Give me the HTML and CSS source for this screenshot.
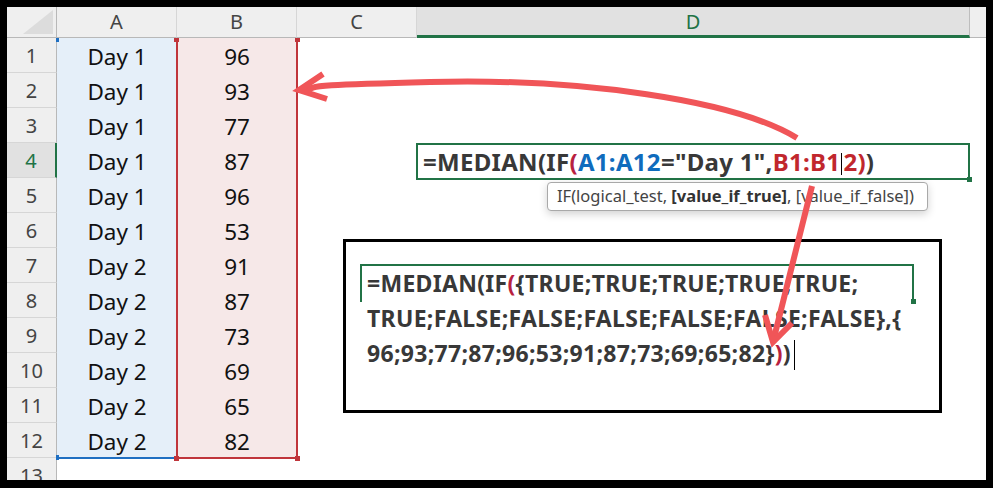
FILE: index.html
```html
<!DOCTYPE html>
<html>
<head>
<meta charset="utf-8">
<link rel="stylesheet" href="styles.css">
</head>
<body>
<div class="frame">
  <div class="sheet">
    <div class="col rowhead">
      <div class="hdr corner"><svg class="tri" width="36" height="26" viewBox="0 0 36 26"><polygon points="34,1 34,25 4,25" fill="#dcdcdc"/></svg></div>
      <div class="rn">1</div><div class="rn">2</div><div class="rn">3</div>
      <div class="rn active">4</div><div class="rn">5</div><div class="rn">6</div>
      <div class="rn">7</div><div class="rn">8</div><div class="rn">9</div>
      <div class="rn">10</div><div class="rn">11</div><div class="rn">12</div>
      <div class="rn">13</div>
    </div>
    <div class="col ca">
      <div class="hdr">A</div>
      <div class="range range-a">
        <span class="h h-tl blue"></span><span class="h h-bl blue"></span>
        <div class="cell">Day 1</div><div class="cell">Day 1</div><div class="cell">Day 1</div>
        <div class="cell">Day 1</div><div class="cell">Day 1</div><div class="cell">Day 1</div>
        <div class="cell">Day 2</div><div class="cell">Day 2</div><div class="cell">Day 2</div>
        <div class="cell">Day 2</div><div class="cell">Day 2</div><div class="cell">Day 2</div>
      </div>
    </div>
    <div class="col cb">
      <div class="hdr">B</div>
      <div class="range range-b">
        <span class="h h-tl red"></span><span class="h h-tr red"></span>
        <span class="h h-bl red"></span><span class="h h-br red"></span>
        <div class="cell">96</div><div class="cell">93</div><div class="cell">77</div>
        <div class="cell">87</div><div class="cell">96</div><div class="cell">53</div>
        <div class="cell">91</div><div class="cell">87</div><div class="cell">73</div>
        <div class="cell">69</div><div class="cell">65</div><div class="cell">82</div>
      </div>
    </div>
    <div class="col cc"><div class="hdr">C</div></div>
    <div class="col cd"><div class="hdr sel">D</div></div>
    <div class="col ce"><div class="hdr"></div></div>
  </div>

  <div class="fbox">
    <span class="ft">=MEDIAN(IF<span class="pr">(</span><span class="bl">A1:A12</span>="Day 1",<span class="rd">B1:B1</span><span class="caret"></span><span class="rd">2)</span>)</span>
    <span class="h h-g"></span>
  </div>
  <div class="tip">IF(logical_test, <b>[value_if_true]</b>, [value_if_false])</div>

  <div class="bbox">
    <div class="edit">
      <div class="editline"><span class="h h-g2"></span></div>
      <div class="ln">=MEDIAN(IF<span class="pr">(</span>{TRUE;TRUE;TRUE;TRUE;TRUE;</div>
      <div class="ln">TRUE;FALSE;FALSE;FALSE;FALSE;FALSE;FALSE},{</div>
      <div class="ln">96;93;77;87;96;53;91;87;73;69;65;82}<span class="pr">)</span>)<span class="caret2"></span></div>
    </div>
  </div>

  <svg class="arrows" width="993" height="488" viewBox="0 0 993 488">
    <g fill="none" stroke="#f05558" stroke-width="6">
      <path d="M797,138 C735,100 580,78 430,82 S330,86 303,90" stroke-linecap="butt"/>
      <path d="M323,74 L299,90 L327,99" stroke-linejoin="miter"/>
      <path d="M812,186 L774,338" />
      <path d="M765,315 L773,342 L792,323" stroke-linejoin="miter"/>
    </g>
  </svg>
</div>
</body>
</html>
```
FILE: styles.css
```css
* { box-sizing: border-box; }
html, body { margin: 0; padding: 0; background: #000; }
.frame {
  position: relative;
  width: 993px;
  height: 488px;
  border-style: solid;
  border-color: #000;
  border-width: 7px 7px 8px 7px;
  background: #fff;
  overflow: hidden;
  font-family: "Noto Sans", "Open Sans", sans-serif;
}
.sheet { display: flex; height: 473px; overflow: hidden; }
.col { display: flex; flex-direction: column; flex: none; }
.rowhead { width: 50px; }
.ca, .cb, .cc { width: 120px; }
.cd { width: 553px; }
.ce { width: 16px; }

.hdr {
  height: 31px;
  flex: none;
  background: #efefef;
  border-right: 1px solid #d6d6d6;
  border-bottom: 1px solid #b8b8b8;
  color: #444;
  font-size: 20px;
  line-height: 30px;
  text-align: center;
}
.hdr.corner { position: relative; border-right: 1px solid #b8b8b8; }
.tri { position: absolute; right: 1px; bottom: 2px; }
.hdr.sel {
  background: #e1e1e1;
  color: #217346;
  border-bottom: 3px solid #217346;
  border-right: 1px solid #bdbdbd;
}
.ce .hdr { border-right: none; }

.rn {
  height: 35px;
  flex: none;
  background: #efefef;
  border-bottom: 1px solid #d6d6d6;
  border-right: 1px solid #b8b8b8;
  color: #444;
  font-size: 20px;
  line-height: 35px;
  text-align: center;
}
.rn.active {
  background: #e1e1e1;
  color: #217346;
  border-right: 2px solid #217346;
}

.range { position: relative; }
.range-a {
  background: #e5eff9;
  border-bottom: 2px solid #1f6fc2;
  height: 421px;
}
.range-b {
  background: #f6e8e8;
  margin: 0 -1px;
  border-left: 2px solid #c0353b;
  border-right: 2px solid #c0353b;
  border-bottom: 2px solid #c0353b;
  height: 421px;
}
.cell {
  height: 35px;
  line-height: 37px;
  text-align: center;
  font-size: 22.5px;
  color: #111;
}
.range-b .cell { margin: 0 -1px; }

.h { position: absolute; width: 5px; height: 5px; display: block; }
.h.red { background: #c0353b; }
.h.blue { background: #1f6fc2; }
.range-a .h-tl { left: -1px; top: 0; width: 3px; height: 4px; }
.range-a .h-bl { left: -1px; bottom: -3px; width: 3px; height: 5px; }
.range-b .h-tl { left: -4px; top: 0; height: 4px; }
.range-b .h-tr { right: -4px; top: 0; height: 4px; }
.range-b .h-bl { left: -4px; bottom: -4px; }
.range-b .h-br { right: -4px; bottom: -4px; }

.fbox {
  position: absolute;
  left: 409px;
  top: 136px;
  width: 554px;
  height: 37px;
  border: 2px solid #217346;
  background: #fff;
  padding-left: 5px;
  font-weight: bold;
  font-size: 24px;
  letter-spacing: 0.3px;
  line-height: 34px;
  color: #383838;
  white-space: nowrap;
}
.h-g { background: #217346; right: -4px; bottom: -4px; }
.pr { color: #b8213f; }
.bl { color: #0f6cbd; }
.rd { color: #c1272d; }
.caret {
  display: inline-block;
  width: 1px;
  height: 22px;
  background: #000;
  vertical-align: -4px;
  margin: 0 1px 0 1px;
}
.tip {
  position: absolute;
  left: 540px;
  top: 175px;
  width: 381px;
  height: 29px;
  border: 1px solid #a9a9a9;
  border-radius: 4px;
  background: #fff;
  box-shadow: 0 3px 8px rgba(0,0,0,0.18);
  font-size: 16.5px;
  line-height: 26px;
  color: #444;
  padding-left: 9px;
  white-space: nowrap;
}
.tip b { color: #333; }

.bbox {
  position: absolute;
  left: 336px;
  top: 232px;
  width: 599px;
  height: 174px;
  border: 3px solid #000;
  background: #fff;
  padding: 22px 0 0 14px;
}
.edit { position: relative; }
.editline {
  position: absolute;
  left: 0;
  top: 0;
  width: 554px;
  height: 38px;
  border: 2px solid #217346;
  border-bottom: none;
}
.h-g2 { background: #217346; right: -4px; bottom: -2px; width: 5px; height: 5px; }
.ln {
  padding-left: 7px;
  height: 35px;
  line-height: 38px;
  font-weight: bold;
  font-size: 23px;
  letter-spacing: 0.3px;
  color: #383838;
  white-space: nowrap;
}
.caret2 {
  display: inline-block;
  width: 1px;
  height: 30px;
  background: #000;
  vertical-align: -8px;
  margin-left: 3px;
}
.arrows { position: absolute; left: -7px; top: -7px; pointer-events: none; }
```
